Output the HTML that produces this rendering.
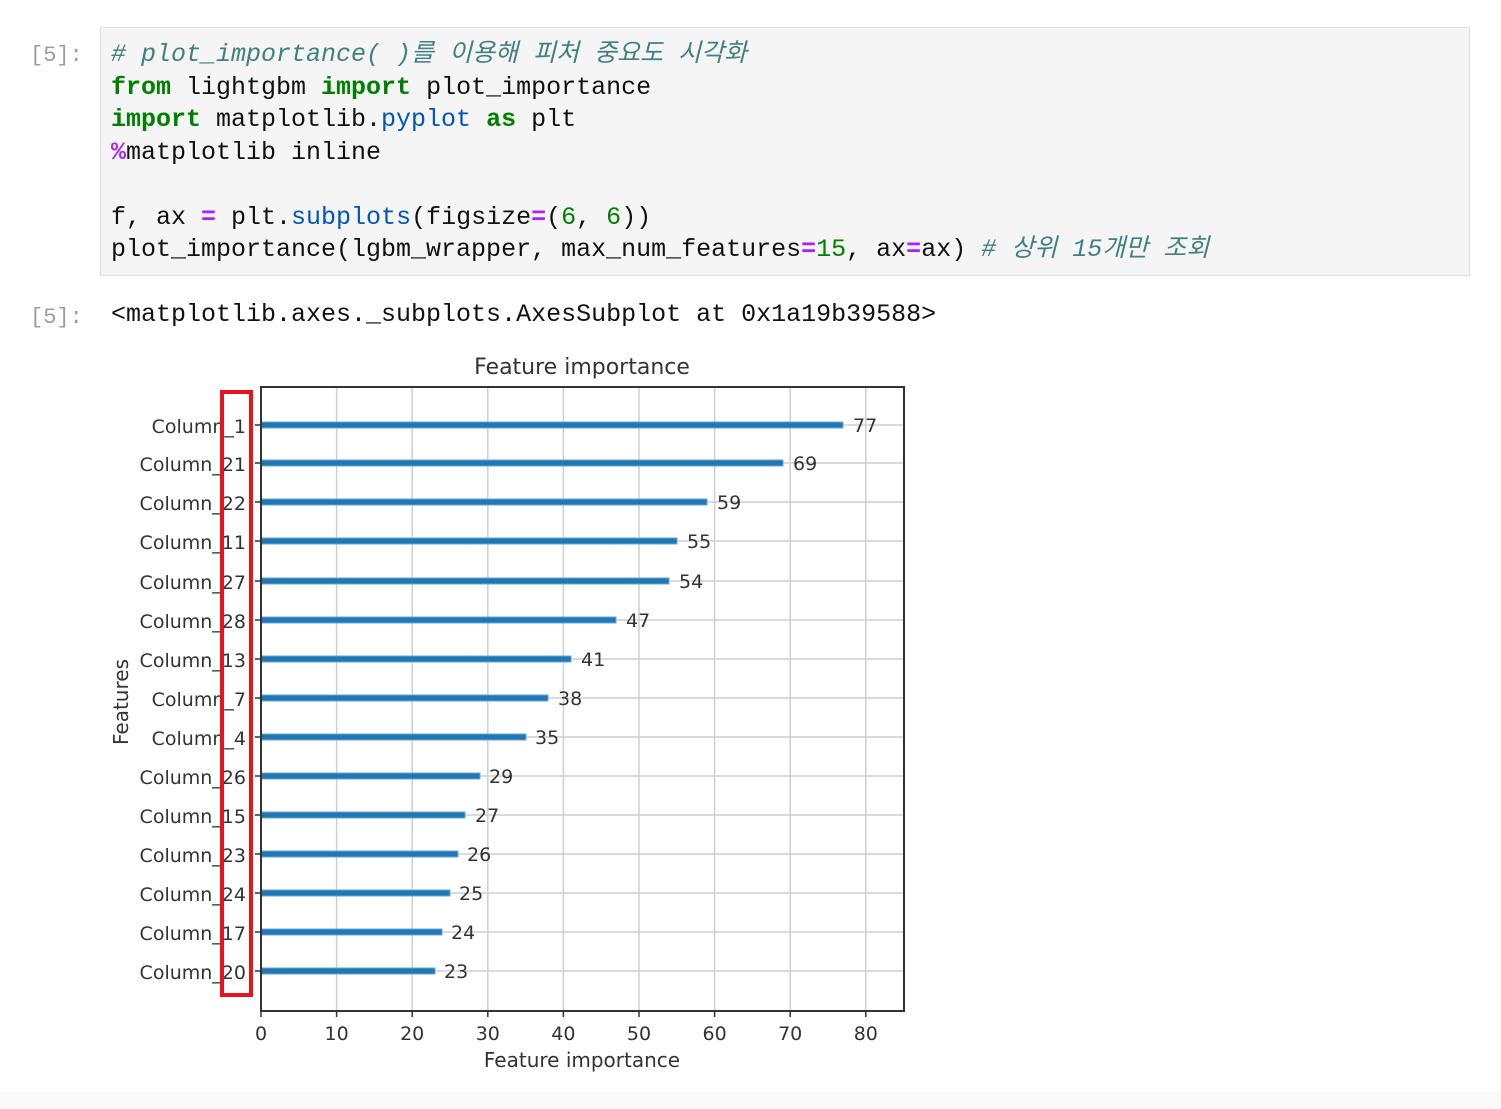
<!DOCTYPE html>
<html><head><meta charset="utf-8"><style>
body{margin:0;width:1501px;height:1109px;background:#fff;position:relative;overflow:hidden;font-family:"Liberation Mono","Noto Sans CJK KR",monospace}
.p{position:absolute;left:30px;color:#9e9e9e;font-size:22px}
.cell{position:absolute;left:100px;top:27px;width:1370px;height:249px;background:#f5f5f5;border:1px solid #e0e0e0;box-sizing:border-box}
pre{margin:0;position:absolute;left:111px;top:39px;font-family:"Liberation Mono","Noto Sans CJK KR",monospace;font-size:25px;line-height:32.5px;color:#111}
.c{color:#408080;font-style:italic}.k{color:#008000;font-weight:bold}.n{color:#0055bb}.o{color:#aa22ff;font-weight:bold}.m{color:#008000}
</style></head><body>
<div class="p" style="top:43px">[5]:</div>
<div class="cell"></div>
<pre><span class="c"># plot_importance( )를 이용해 피처 중요도 시각화</span>
<span class="k">from</span> lightgbm <span class="k">import</span> plot_importance
<span class="k">import</span> matplotlib.<span class="n">pyplot</span> <span class="k">as</span> plt
<span class="o">%</span>matplotlib inline

f, ax <span class="o">=</span> plt.<span class="n">subplots</span>(figsize<span class="o">=</span>(<span class="m">6</span>, <span class="m">6</span>))
plot_importance(lgbm_wrapper, max_num_features<span class="o">=</span><span class="m">15</span>, ax<span class="o">=</span>ax) <span class="c"># 상위 15개만 조회</span></pre>
<div class="p" style="top:305px">[5]:</div>
<pre style="top:299px">&lt;matplotlib.axes._subplots.AxesSubplot at 0x1a19b39588&gt;</pre>
<div style="position:absolute;left:0;top:1092px;width:1501px;height:17px;background:#fafafa"></div>
<svg width="1501" height="1109" style="position:absolute;left:0;top:0" font-family="DejaVu Sans, sans-serif" font-size="19" fill="#333">
<g stroke="#cfcfcf" stroke-width="1.5">
<line x1="336.6" y1="387" x2="336.6" y2="1011"/><line x1="412.2" y1="387" x2="412.2" y2="1011"/><line x1="487.8" y1="387" x2="487.8" y2="1011"/><line x1="563.4" y1="387" x2="563.4" y2="1011"/><line x1="639" y1="387" x2="639" y2="1011"/><line x1="714.6" y1="387" x2="714.6" y2="1011"/><line x1="790.2" y1="387" x2="790.2" y2="1011"/><line x1="865.8" y1="387" x2="865.8" y2="1011"/>
<line x1="261" y1="425" x2="904" y2="425"/><line x1="261" y1="463" x2="904" y2="463"/><line x1="261" y1="502" x2="904" y2="502"/><line x1="261" y1="541" x2="904" y2="541"/><line x1="261" y1="581" x2="904" y2="581"/><line x1="261" y1="620" x2="904" y2="620"/><line x1="261" y1="659" x2="904" y2="659"/><line x1="261" y1="698" x2="904" y2="698"/><line x1="261" y1="737" x2="904" y2="737"/><line x1="261" y1="776" x2="904" y2="776"/><line x1="261" y1="815" x2="904" y2="815"/><line x1="261" y1="854" x2="904" y2="854"/><line x1="261" y1="893" x2="904" y2="893"/><line x1="261" y1="932" x2="904" y2="932"/><line x1="261" y1="971" x2="904" y2="971"/>
</g>
<g fill="#1f77b4" stroke="#6aa6d6" stroke-width="1">
<rect x="261" y="422" width="582" height="6"/><rect x="261" y="460" width="522" height="6"/><rect x="261" y="499" width="446" height="6"/><rect x="261" y="538" width="416" height="6"/><rect x="261" y="578" width="408" height="6"/><rect x="261" y="617" width="355" height="6"/><rect x="261" y="656" width="310" height="6"/><rect x="261" y="695" width="287" height="6"/><rect x="261" y="734" width="265" height="6"/><rect x="261" y="773" width="219" height="6"/><rect x="261" y="812" width="204" height="6"/><rect x="261" y="851" width="197" height="6"/><rect x="261" y="890" width="189" height="6"/><rect x="261" y="929" width="181" height="6"/><rect x="261" y="968" width="174" height="6"/>
</g>
<rect x="261" y="387" width="643" height="624" fill="none" stroke="#333" stroke-width="2"/>
<g stroke="#333" stroke-width="1.5">
<line x1="255" y1="425" x2="261" y2="425"/><line x1="255" y1="463" x2="261" y2="463"/><line x1="255" y1="502" x2="261" y2="502"/><line x1="255" y1="541" x2="261" y2="541"/><line x1="255" y1="581" x2="261" y2="581"/><line x1="255" y1="620" x2="261" y2="620"/><line x1="255" y1="659" x2="261" y2="659"/><line x1="255" y1="698" x2="261" y2="698"/><line x1="255" y1="737" x2="261" y2="737"/><line x1="255" y1="776" x2="261" y2="776"/><line x1="255" y1="815" x2="261" y2="815"/><line x1="255" y1="854" x2="261" y2="854"/><line x1="255" y1="893" x2="261" y2="893"/><line x1="255" y1="932" x2="261" y2="932"/><line x1="255" y1="971" x2="261" y2="971"/>
<line x1="261" y1="1011" x2="261" y2="1017"/><line x1="336.6" y1="1011" x2="336.6" y2="1017"/><line x1="412.2" y1="1011" x2="412.2" y2="1017"/><line x1="487.8" y1="1011" x2="487.8" y2="1017"/><line x1="563.4" y1="1011" x2="563.4" y2="1017"/><line x1="639" y1="1011" x2="639" y2="1017"/><line x1="714.6" y1="1011" x2="714.6" y2="1017"/><line x1="790.2" y1="1011" x2="790.2" y2="1017"/><line x1="865.8" y1="1011" x2="865.8" y2="1017"/>
</g>
<g text-anchor="end">
<text x="246" y="433">Column_1</text><text x="246" y="471">Column_21</text><text x="246" y="510">Column_22</text><text x="246" y="549">Column_11</text><text x="246" y="589">Column_27</text><text x="246" y="628">Column_28</text><text x="246" y="667">Column_13</text><text x="246" y="706">Column_7</text><text x="246" y="745">Column_4</text><text x="246" y="784">Column_26</text><text x="246" y="823">Column_15</text><text x="246" y="862">Column_23</text><text x="246" y="901">Column_24</text><text x="246" y="940">Column_17</text><text x="246" y="979">Column_20</text>
</g>
<g>
<text x="853" y="432">77</text><text x="793" y="470">69</text><text x="717" y="509">59</text><text x="687" y="548">55</text><text x="679" y="588">54</text><text x="626" y="627">47</text><text x="581" y="666">41</text><text x="558" y="705">38</text><text x="535" y="744">35</text><text x="489" y="783">29</text><text x="475" y="822">27</text><text x="467" y="861">26</text><text x="459" y="900">25</text><text x="451" y="939">24</text><text x="444" y="978">23</text>
</g>
<g text-anchor="middle">
<text x="261" y="1040">0</text><text x="336.6" y="1040">10</text><text x="412.2" y="1040">20</text><text x="487.8" y="1040">30</text><text x="563.4" y="1040">40</text><text x="639" y="1040">50</text><text x="714.6" y="1040">60</text><text x="790.2" y="1040">70</text><text x="865.8" y="1040">80</text>
<text x="582" y="1067" font-size="20">Feature importance</text>
<text x="582" y="374" font-size="22">Feature importance</text>
<text x="0" y="0" font-size="20" transform="translate(128,702) rotate(-90)">Features</text>
</g>
<rect x="222" y="392" width="29" height="603" fill="none" stroke="#e8141c" stroke-width="4"/>
</svg>
</body></html>
